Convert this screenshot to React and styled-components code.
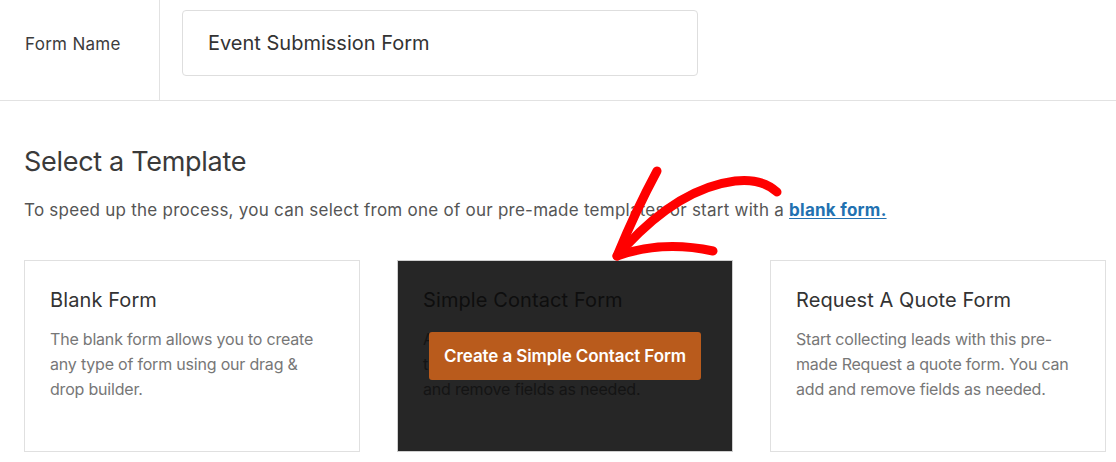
import React from 'react'
import styled, { createGlobalStyle } from 'styled-components'

const GlobalStyle = createGlobalStyle`
  body {
    margin: 0;
    background: #fff;
    font-family: Inter, "Liberation Sans", Arial, sans-serif;
    -webkit-font-smoothing: antialiased;
  }
`

const Page = styled.div`
  position: relative;
  width: 1116px;
  height: 462px;
  overflow: hidden;
`

const NameRow = styled.div`
  display: flex;
  height: 100px;
  border-bottom: 1px solid #e2e2e2;
`

const NameLabel = styled.div`
  width: 134px;
  padding-left: 25px;
  border-right: 1px solid #e2e2e2;
  display: flex;
  align-items: center;
  font-size: 17px;
  letter-spacing: 0.3px;
  color: #3c3c3c;
  padding-bottom: 12px;
  box-sizing: content-box;
`

const NameField = styled.div`
  padding: 10px 0 0 22px;
`

const NameInput = styled.div`
  width: 516px;
  height: 66px;
  box-sizing: border-box;
  border: 1px solid #dedede;
  border-radius: 4px;
  padding-left: 25px;
  display: flex;
  align-items: center;
  font-size: 20px;
  color: #333;
`

const Section = styled.div`
  padding: 43px 0 0 24px;
`

const Heading = styled.h2`
  margin: 0;
  font-size: 27px;
  font-weight: 400;
  letter-spacing: -0.3px;
  color: #3a3a3a;
  line-height: 36px;
`

const Intro = styled.p`
  margin: 18px 0 0;
  font-size: 17px;
  letter-spacing: 0.25px;
  color: #555;
  line-height: 24px;
`

const BlankLink = styled.a`
  color: #2271b1;
  font-weight: 700;
  text-decoration: underline;
  text-underline-offset: 2px;
`

const CardGrid = styled.div`
  display: grid;
  grid-template-columns: repeat(3, 336px);
  gap: 37px;
  margin-top: 38px;
`

const Card = styled.div`
  position: relative;
  height: 192px;
  box-sizing: border-box;
  padding: 26px 25px;
  border: 1px solid ${p => (p.dim ? '#cfcfcf' : '#e0e0e0')};
  background: ${p => (p.dim ? '#262626' : '#fff')};
`

const CardTitle = styled.h3`
  margin: 0;
  font-size: 20px;
  font-weight: 400;
  letter-spacing: 0.1px;
  line-height: 26px;
  color: ${p => (p.dim ? '#0e0e0e' : '#333')};
`

const CardText = styled.p`
  margin: 14px 0 0;
  font-size: 16px;
  letter-spacing: -0.2px;
  line-height: 25px;
  color: ${p => (p.dim ? '#141414' : '#777')};
`

const Overlay = styled.div`
  position: absolute;
  inset: 0;
  display: flex;
  align-items: center;
  justify-content: center;
`

const CreateButton = styled.button`
  width: 272px;
  height: 48px;
  border: 0;
  border-radius: 3px;
  background: #b95b1c;
  color: #fff;
  font-family: inherit;
  font-size: 17px;
  font-weight: 600;
  letter-spacing: -0.1px;
  cursor: pointer;
`

const Arrow = styled.svg`
  position: absolute;
  left: 0;
  top: 0;
  pointer-events: none;
`

const templates = [
  {
    title: 'Blank Form',
    text: 'The blank form allows you to create any type of form using our drag & drop builder.',
  },
  {
    title: 'Simple Contact Form',
    text: 'Allow your users to contact you with this simple contact form. You can add and remove fields as needed.',
    dim: true,
  },
  {
    title: 'Request A Quote Form',
    text: 'Start collecting leads with this pre-made Request a quote form. You can add and remove fields as needed.',
  },
]

export default function App() {
  return (
    <Page>
      <GlobalStyle />
      <NameRow>
        <NameLabel>Form Name</NameLabel>
        <NameField>
          <NameInput>Event Submission Form</NameInput>
        </NameField>
      </NameRow>
      <Section>
        <Heading>Select a Template</Heading>
        <Intro>
          To speed up the process, you can select from one of our pre-made templates or start with a{' '}
          <BlankLink href="#">blank form.</BlankLink>
        </Intro>
        <CardGrid>
          {templates.map(t => (
            <Card key={t.title} dim={t.dim}>
              <CardTitle dim={t.dim}>{t.title}</CardTitle>
              <CardText dim={t.dim}>{t.text}</CardText>
              {t.dim && (
                <Overlay>
                  <CreateButton>Create a Simple Contact Form</CreateButton>
                </Overlay>
              )}
            </Card>
          ))}
        </CardGrid>
      </Section>
      <Arrow width="1116" height="462" viewBox="0 0 1116 462">
        <g fill="none" stroke="#f00" strokeLinecap="round" strokeLinejoin="round" strokeWidth="9">
          <path d="M777 192 Q762 178 735 181 Q680 188 626 246" />
          <path d="M657 171 Q636 210 617 256" />
          <path d="M617 256 Q662 240 713 251" />
        </g>
      </Arrow>
    </Page>
  )
}
